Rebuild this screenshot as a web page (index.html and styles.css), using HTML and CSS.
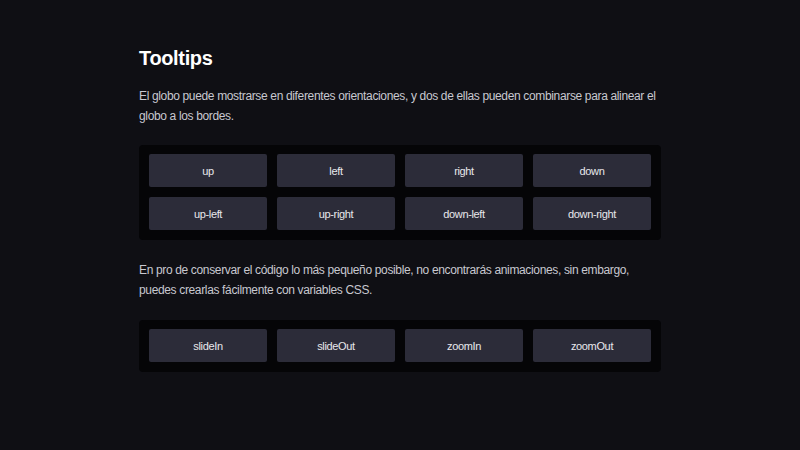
FILE: index.html
```html
<!DOCTYPE html>
<html lang="es">
<head>
<meta charset="utf-8">
<title>Tooltips</title>
<link rel="stylesheet" href="styles.css">
</head>
<body>
<main class="page">
  <h1 class="title">Tooltips</h1>
  <p class="text">El globo puede mostrarse en diferentes orientaciones, y dos de ellas pueden combinarse para alinear el globo a los bordes.</p>
  <div class="demo">
    <button class="btn">up</button>
    <button class="btn">left</button>
    <button class="btn">right</button>
    <button class="btn">down</button>
    <button class="btn">up-left</button>
    <button class="btn">up-right</button>
    <button class="btn">down-left</button>
    <button class="btn">down-right</button>
  </div>
  <p class="text text-second">En pro de conservar el código lo más pequeño posible, no encontrarás animaciones, sin embargo, puedes crearlas fácilmente con variables CSS.</p>
  <div class="demo demo-second">
    <button class="btn">slideIn</button>
    <button class="btn">slideOut</button>
    <button class="btn">zoomIn</button>
    <button class="btn">zoomOut</button>
  </div>
</main>
</body>
</html>
```
FILE: styles.css
```css
html, body {
  margin: 0;
  padding: 0;
  background: #0f0f14;
}
body {
  font-family: "Liberation Sans", Arial, sans-serif;
  color: #c8c8d0;
}
.page {
  width: 522px;
  margin: 0 auto;
  padding-top: 44px;
}
.title {
  margin: 0;
  font-size: 20px;
  line-height: 28px;
  font-weight: bold;
  letter-spacing: -0.35px;
  color: #ffffff;
}
.text {
  margin: 14px 0 0;
  font-size: 12px;
  line-height: 20px;
  letter-spacing: -0.35px;
}
.text-second {
  margin-top: 20px;
}
.demo {
  margin-top: 19px;
  background: #050507;
  border-radius: 4px;
  padding: 9px 10px 10px;
  display: grid;
  grid-template-columns: repeat(4, 1fr);
  gap: 10px;
}
.demo-second {
  margin-top: 20px;
}
.btn {
  height: 33px;
  border: none;
  border-radius: 2px;
  background: #2c2c39;
  color: #e8e8ec;
  font-family: "Liberation Sans", Arial, sans-serif;
  font-size: 11px;
  letter-spacing: -0.35px;
  padding: 0;
}
```
